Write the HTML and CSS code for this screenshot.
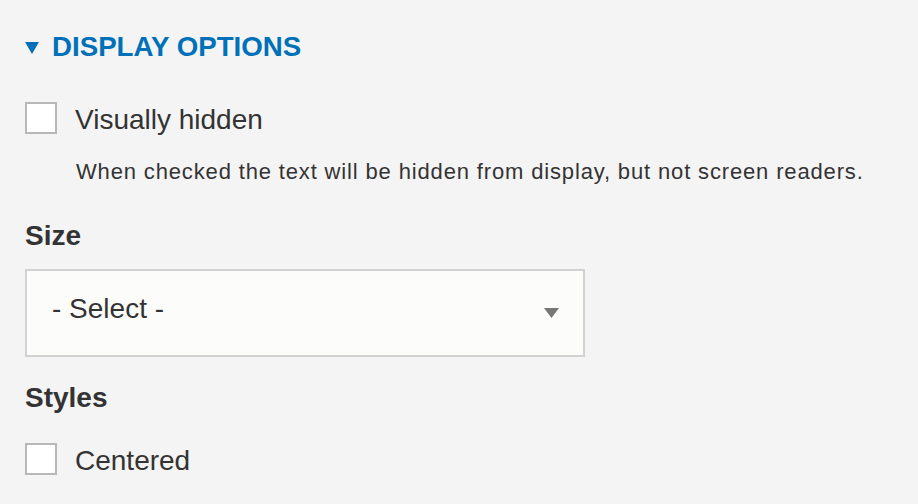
FILE: index.html
```html
<!DOCTYPE html>
<html lang="en">
<head>
    <meta charset="UTF-8">
    <meta name="viewport" content="width=device-width, initial-scale=1.0">
    <title>Display options</title>
    <link rel="stylesheet" href="styles.css">
</head>
<body>

    <div class="panel">
        <!-- Section header -->
        <div class="summary">
            <svg class="summary-arrow" width="14" height="12" viewBox="0 0 14 12"><polygon points="0,0 14,0 7,12" fill="#0071b8"/></svg>
            <span>DISPLAY OPTIONS</span>
        </div>

        <!-- Visually hidden -->
        <label class="check-row first">
            <span class="check-box"></span>
            <span class="check-label">Visually hidden</span>
        </label>
        <p class="description">When checked the text will be hidden from display, but not screen readers.</p>

        <!-- Size -->
        <div class="field-label size-label">Size</div>
        <div class="select">
            <span class="select-text">- Select -</span>
            <svg class="select-arrow" width="15" height="10" viewBox="0 0 15 10"><polygon points="0,0 15,0 7.5,10" fill="#777777"/></svg>
        </div>

        <!-- Styles -->
        <div class="field-label styles-label">Styles</div>
        <label class="check-row last">
            <span class="check-box"></span>
            <span class="check-label">Centered</span>
        </label>
    </div>

</body>
</html>
```

FILE: styles.css
```css
/* General Styles */
body {
    margin: 0;
    padding: 0;
    background-color: #f4f4f4;
    font-family: "Liberation Sans", Arial, sans-serif;
    color: #333333;
}

.panel {
    padding: 30px 25px 0 25px;
}

/* Header */
.summary {
    display: flex;
    align-items: center;
    gap: 13px;
    height: 34px;
    font-size: 27.7px;
    font-weight: bold;
    line-height: 34px;
    color: #0071b8;
}

.summary-arrow {
    display: block;
    margin-top: 1px;
}

/* Checkboxes */
.check-row {
    display: flex;
    align-items: center;
    gap: 18px;
    height: 32px;
}

.check-row.first {
    margin-top: 38px;
}

.check-row.last {
    margin-top: 31px;
}

.check-box {
    width: 32px;
    height: 32px;
    box-sizing: border-box;
    border: 2px solid #b8b8b8;
    background-color: #ffffff;
}

.check-label {
    font-size: 28px;
    line-height: 29px;
    padding-top: 3px;
}

.description {
    margin: 24px 0 0 0;
    padding-left: 51px;
    font-size: 22px;
    letter-spacing: 0.85px;
    line-height: 28px;
}

/* Labels */
.field-label {
    font-size: 28px;
    font-weight: bold;
    line-height: 29px;
    padding-top: 3px;
}

.size-label {
    margin-top: 32px;
}

.styles-label {
    margin-top: 23px;
}

/* Select */
.select {
    display: flex;
    align-items: center;
    justify-content: space-between;
    width: 560px;
    height: 88px;
    box-sizing: border-box;
    margin-top: 19px;
    padding: 0 24px 0 25px;
    border: 2px solid #d2d2d2;
    background-color: #fcfcfa;
}

.select-text {
    font-size: 28px;
    line-height: 32px;
    margin-bottom: 8px;
}

.select-arrow {
    display: block;
}
```
